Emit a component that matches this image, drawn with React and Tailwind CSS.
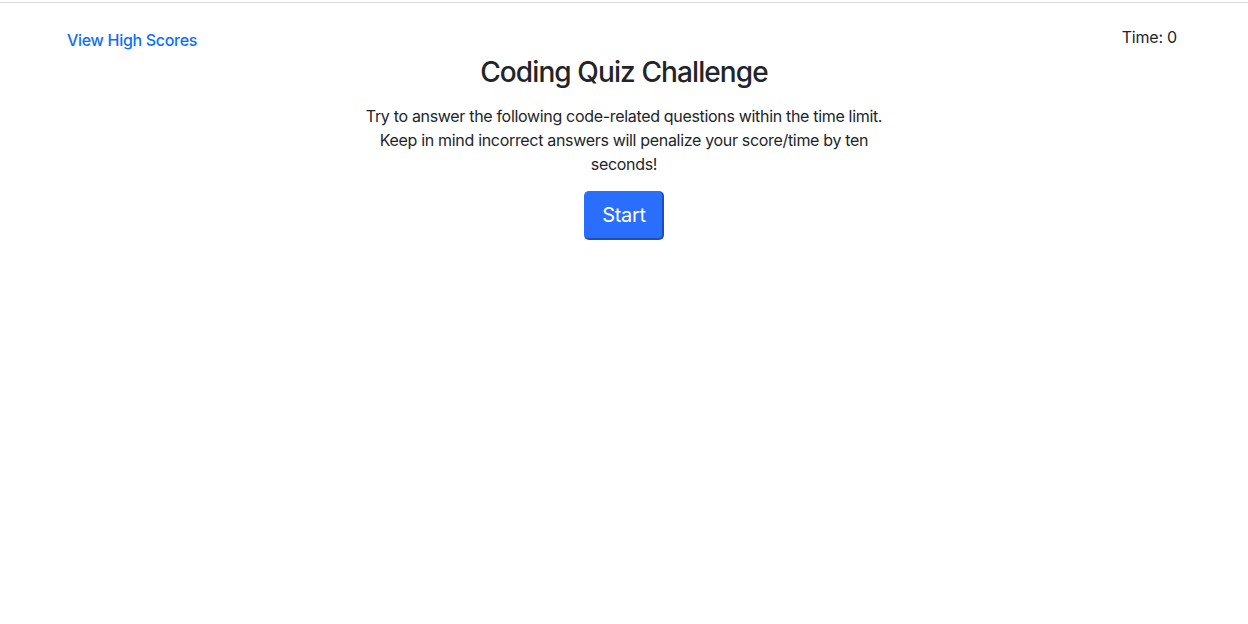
export default function App() {
    return (
        <div className="min-h-screen bg-white font-['Inter','Liberation_Sans',sans-serif] text-[#212529]">
            <div className="mt-[2px] border-t border-[#dcdce0]" />
            <header className="flex items-start justify-between pl-[67px] pr-[71px] pt-[22px]">
                <a href="#" className="mt-[3px] text-[16px] font-medium leading-6 tracking-[-0.3px] text-[#0d6efd]">
                    View High Scores
                </a>
                <span className="text-[16px] leading-6 tracking-[-0.2px]">Time: 0</span>
            </header>
            <main className="flex flex-col items-center">
                <h1 className="mt-[3px] text-[28px] font-medium leading-[34px] tracking-[-0.9px]">
                    Coding Quiz Challenge
                </h1>
                <p className="mt-[15px] text-center text-[16px] leading-6 tracking-[-0.32px]">
                    Try to answer the following code-related questions within the time limit.
                    <br />
                    Keep in mind incorrect answers will penalize your score/time by ten
                    <br />
                    seconds!
                </p>
                <button className="mt-[15px] rounded-[5px] border-t border-l border-r-2 border-b-2 border-t-[#2a6efd] border-l-[#2a6efd] border-r-[#1d4fb5] border-b-[#1d4fb5] bg-[#2a6efd] pl-[17px] pr-4 py-2 text-[20px] leading-[30px] tracking-[-0.3px] text-white">
                    Start
                </button>
            </main>
        </div>
    );
}
